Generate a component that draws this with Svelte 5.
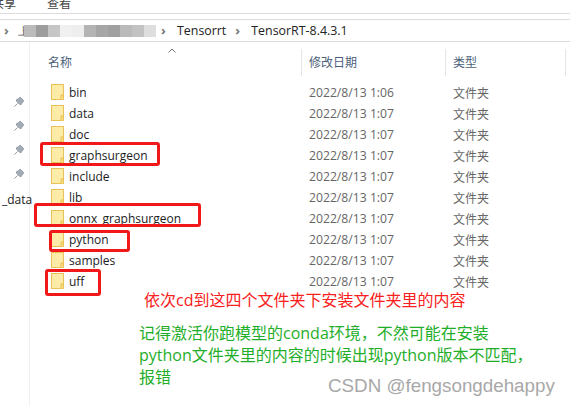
<script>
  const rows = [
    ["bin", "2022/8/13 1:06"],
    ["data", "2022/8/13 1:07"],
    ["doc", "2022/8/13 1:07"],
    ["graphsurgeon", "2022/8/13 1:07"],
    ["include", "2022/8/13 1:07"],
    ["lib", "2022/8/13 1:07"],
    ["onnx_graphsurgeon", "2022/8/13 1:07"],
    ["python", "2022/8/13 1:07"],
    ["samples", "2022/8/13 1:07"],
    ["uff", "2022/8/13 1:07"],
  ]
  const mosaic = ["#bbb", "#9d9d9d", "#c6c6c6", "#f0f0f0", "#eee", "#b4b4b4", "#a6a6a6", "#a0a0a0", "#bababa", "#c2c2c2", "#dedede"]
  const marks = [
    { x: 40, y: 142, w: 120, h: 24 },
    { x: 34, y: 203, w: 167, h: 24 },
    { x: 49, y: 230, w: 81, h: 22 },
    { x: 45, y: 269, w: 56, h: 27 },
  ]
</script>

<div class="shot">
  <div class="menu">
    <span class="tab first">共享</span>
    <span class="tab">查看</span>
  </div>

  <div class="address">
    <span class="chev">›</span>
    <span class="cut">上</span>
    <div class="mosaic">
      {#each mosaic as c}
        <span class="cell" style={`background:${c}`}></span>
      {/each}
    </div>
    <span class="chev">›</span>
    <span class="crumb">Tensorrt</span>
    <span class="chev">›</span>
    <span class="crumb">TensorRT-8.4.3.1</span>
  </div>

  <div class="body">
    <aside class="side">
      {#each [0, 1, 2, 3] as p (p)}
        <svg class="pin" width="12" height="12" viewBox="0 0 12 12" aria-hidden="true">
          <path d="M7 1 11 5 9.6 5.8 8.2 8.6 6.8 8.4 3.6 5.2 3.4 3.8 6.2 2.4Z M4.6 7.4 1.4 10.6" fill="#a4acb5" stroke="#949ca5" stroke-width="1" />
        </svg>
      {/each}
      <span class="drive">_data</span>
    </aside>

    <main class="list">
      <div class="head">
        <span class="col name">名称</span>
        <span class="col date">修改日期</span>
        <span class="col type">类型</span>
        <svg class="sort" width="8" height="5" viewBox="0 0 8 5" aria-hidden="true">
          <path d="M.5 4.5 4 1l3.5 3.5" fill="none" stroke="#777" />
        </svg>
      </div>
      {#each rows as [name, date] (name)}
        <div class="row">
          <span class="file">
            <svg class="folder" width="13" height="17" viewBox="0 0 13 17" aria-hidden="true">
              <rect x=".5" y=".5" width="12" height="15" fill="#fde58e" stroke="#e8c258" />
              <path d="M1 1h11v9H10v5H1z" fill="#fdeba8" />
              <path d="M10 15.5V11h2.5v4.5" fill="#f9dc7c" stroke="#e8c258" />
            </svg>
            <span class="label">{name}</span>
          </span>
          <span class="when">{date}</span>
          <span class="kind">文件夹</span>
        </div>
      {/each}
    </main>
  </div>

  {#each marks as m}
    <span class="mark" style={`left:${m.x}px;top:${m.y}px;width:${m.w}px;height:${m.h}px`}></span>
  {/each}

  <p class="note red">依次cd到这四个文件夹下安装文件夹里的内容</p>
  <p class="note green">记得激活你跑模型的conda环境，不然可能在安装<br />python文件夹里的内容的时候出现python版本不匹配，<br />报错</p>
  <span class="water">CSDN @fengsongdehappy</span>
</div>

<style>
  :global(body) {
    margin: 0;
    background: #fff;
  }

  .shot {
    position: relative;
    width: 570px;
    height: 406px;
    overflow: hidden;
    background: #fff;
    font-family: "Noto Sans CJK SC", "Open Sans", sans-serif;
    font-size: 12px;
  }

  .menu {
    display: flex;
    height: 13px;
    border-bottom: 1px solid #dcdcdc;
    overflow: hidden;
    color: #444;
    line-height: 6px;
  }

  .tab {
    width: 24px;
  }

  .tab.first {
    width: 47px;
    text-indent: -8px;
  }

  .address {
    display: flex;
    align-items: center;
    height: 21px;
    margin-top: 5px;
    border-top: 1px solid #dcdcdc;
    border-bottom: 1px solid #d9d9d9;
    font-family: "Open Sans", "Liberation Sans", sans-serif;
    font-size: 12.4px;
    color: #222;
    padding-left: 4px;
  }

  .chev {
    width: 8px;
    color: #777;
    font-weight: 700;
    font-size: 13px;
    line-height: 1;
  }

  .cut {
    width: 6px;
    margin-left: 6px;
    overflow: hidden;
    font-size: 11px;
    color: #555;
  }

  .mosaic {
    display: flex;
    height: 12px;
    margin-right: 5px;
  }

  .cell {
    width: 12px;
  }

  .crumb {
    margin: 0 9px 0 5px;
    white-space: nowrap;
  }

  .chev + .crumb {
    margin-left: 8px;
  }

  .body {
    display: flex;
    height: 365px;
  }

  .side {
    display: flex;
    flex-direction: column;
    align-items: center;
    width: 29px;
    flex-shrink: 0;
    padding-top: 54px;
    gap: 12px;
    border-right: 1px solid #f0f0f0;
    box-sizing: content-box;
  }

  .pin {
    margin-left: 8px;
  }

  .drive {
    align-self: flex-start;
    margin-top: -1px;
    padding-left: 2px;
    font-family: "Open Sans", sans-serif;
    font-size: 12px;
    color: #222;
  }

  .list {
    flex: 1;
    padding-top: 7px;
  }

  .head {
    position: relative;
    display: grid;
    grid-template-columns: 272px 144px 120px;
    height: 27px;
    align-items: center;
    margin-bottom: 6px;
    color: #4c607a;
    font-size: 12px;
  }

  .col {
    height: 27px;
    line-height: 26px;
    box-sizing: border-box;
    padding-left: 18px;
    border-right: 1px solid #e5e5e5;
  }

  .date,
  .type {
    padding-left: 7px;
  }

  .sort {
    position: absolute;
    left: 138px;
    top: -1px;
  }

  .row {
    display: grid;
    grid-template-columns: 272px 144px 120px;
    height: 21px;
    align-items: center;
    color: #666;
    font-size: 12px;
  }

  .file {
    display: flex;
    align-items: center;
    padding-left: 21px;
    gap: 5px;
  }

  .folder {
    flex-shrink: 0;
  }

  .label {
    font-family: "Open Sans", sans-serif;
    color: #1c1c1c;
    font-size: 12px;
  }

  .when {
    padding-left: 7px;
    font-family: "Open Sans", sans-serif;
    font-size: 12.2px;
  }

  .kind {
    padding-left: 7px;
  }

  .mark {
    position: absolute;
    box-sizing: border-box;
    border: 3px solid #f01818;
    border-radius: 3px;
  }

  .note {
    position: absolute;
    margin: 0;
    font-family: "Open Sans", "Noto Sans CJK SC", sans-serif;
    font-size: 16px;
    line-height: 22px;
    white-space: nowrap;
  }

  .red {
    left: 144px;
    top: 289px;
    color: #f92020;
  }

  .green {
    left: 139px;
    top: 322px;
    color: #1fae2a;
  }

  .water {
    position: absolute;
    left: 328px;
    top: 375px;
    font-family: "Liberation Sans", sans-serif;
    font-size: 18.8px;
    color: #a8a8a8;
    white-space: nowrap;
  }
</style>
